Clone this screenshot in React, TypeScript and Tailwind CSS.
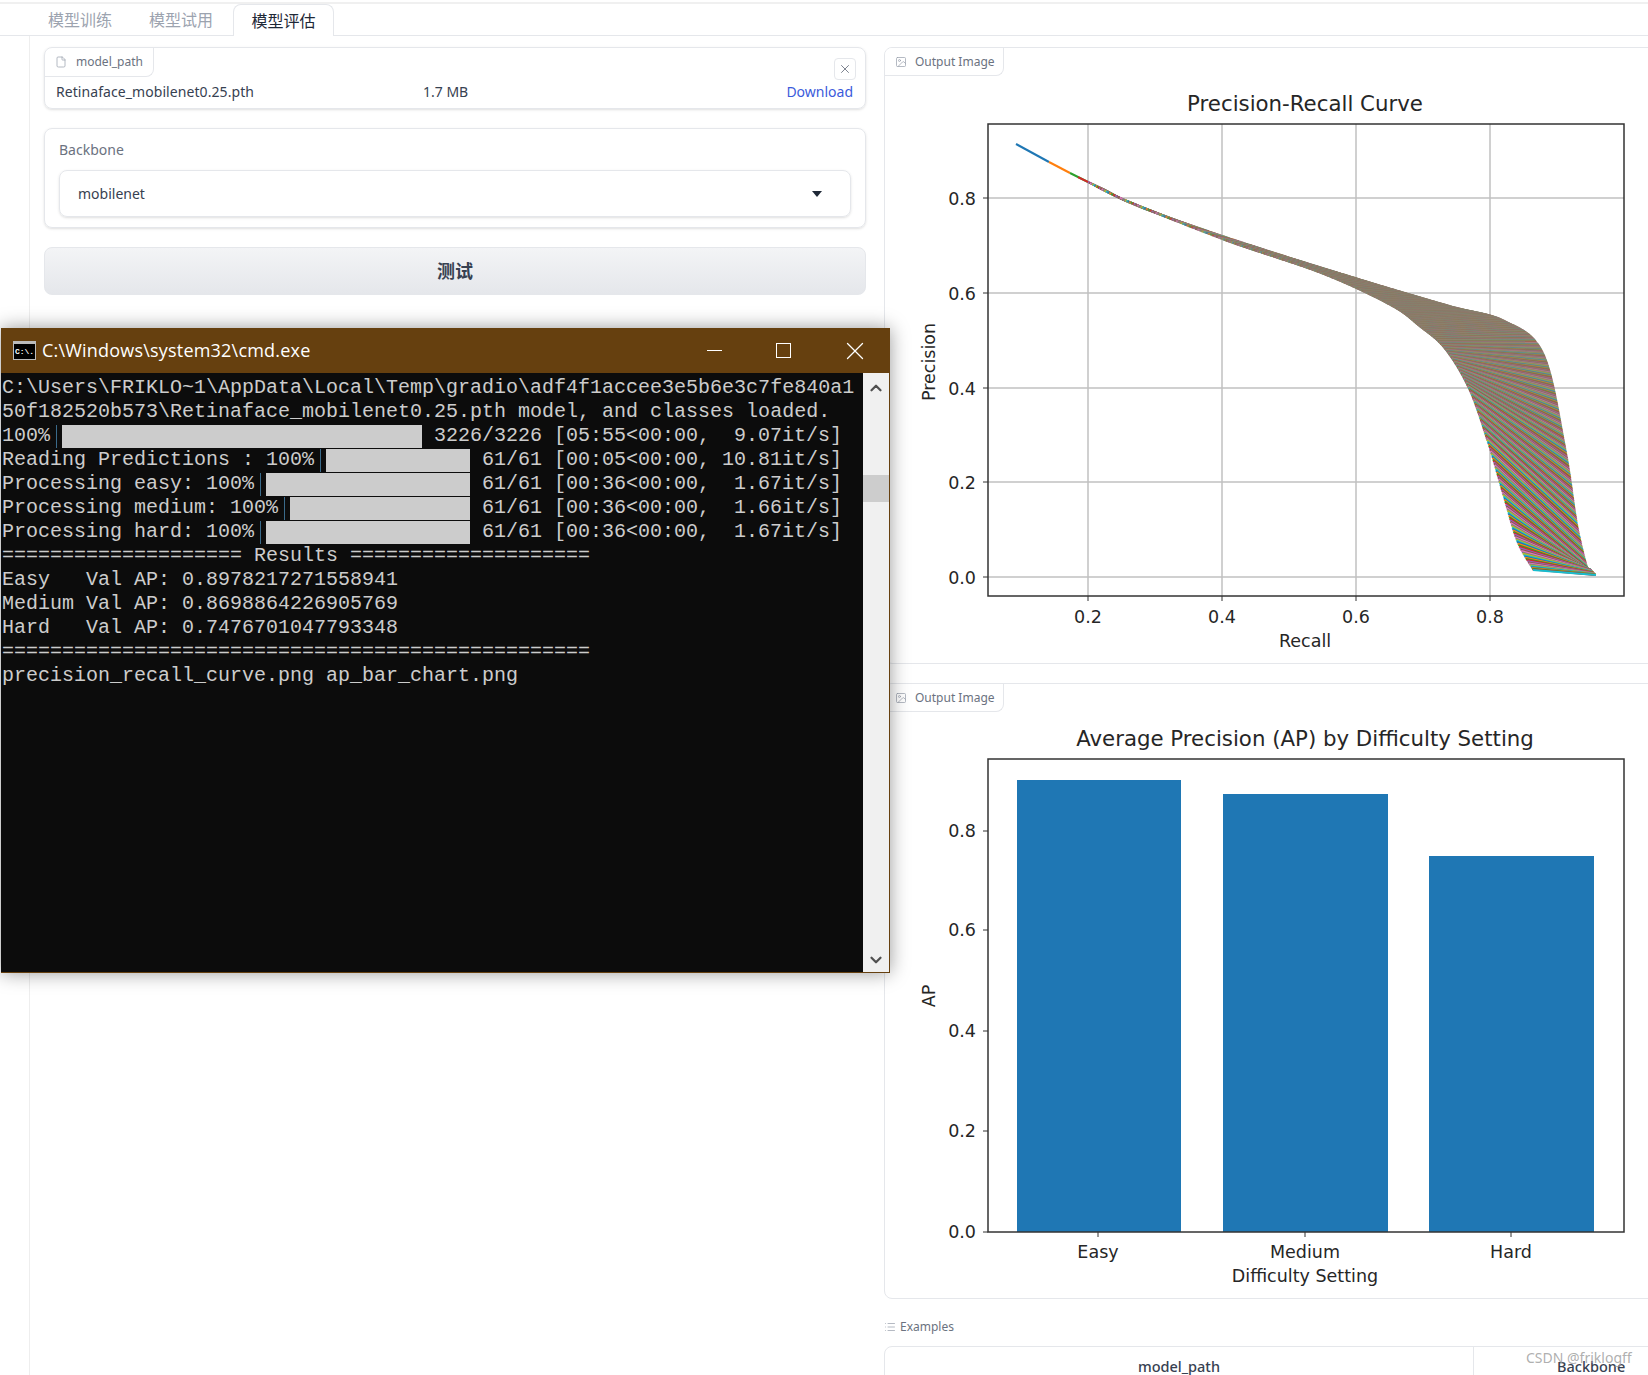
import { ChevronDown, ChevronUp, File, Image, List, X } from "lucide-react";

const UI_FONT = "font-['Noto_Sans','Noto_Sans_CJK_SC',sans-serif]";
const TAB10 = ["#1f77b4", "#ff7f0e", "#2ca02c", "#d62728", "#9467bd", "#8c564b", "#e377c2", "#7f7f7f", "#bcbd22", "#17becf"];
const MUD = [138, 125, 107];

// [left x, left y, right x, right y, lines until next key, how far the colour sinks into the brown]
const BAND: number[][] = [
  [1016, 144, 1049, 162, 1, 0],
  [1049, 162, 1070, 173, 1, 0],
  [1070, 173, 1088, 182, 2, 0],
  [1088, 182, 1105, 190, 24, 0],
  [1125, 200, 1145, 209, 50, 0.2],
  [1222, 239, 1250, 245, 110, 0.6],
  [1321, 273, 1365, 281, 120, 0.85],
  [1390, 305, 1450, 306, 110, 0.9],
  [1419, 326, 1505, 321, 110, 0.85],
  [1444, 348, 1544, 354, 120, 0.65],
  [1468, 387, 1566, 450, 70, 0.3],
  [1487, 440, 1577, 522, 40, 0.05],
  [1503, 495, 1587, 566, 32, 0],
  [1517, 542, 1591, 570, 24, 0],
  [1533, 570, 1596, 575, 1, 0],
];

const mixColor = (hex: string, amount: number) => {
  const rgb = [1, 3, 5].map((i) => parseInt(hex.slice(i, i + 2), 16));
  const out = rgb.map((v, i) => Math.round(v + (MUD[i] - v) * amount));
  return `rgb(${out.join(",")})`;
};

const buildLines = () => {
  const lines: { d: string; color: string }[] = [];
  BAND.forEach((key, k) => {
    const next = BAND[k + 1];
    if (!next) {
      lines.push({ d: `M${key[0]} ${key[1]}L${key[2]} ${key[3]}`, color: TAB10[9] });
      return;
    }
    const prev = BAND[k - 1] ?? key;
    const after = BAND[k + 2] ?? next;
    for (let i = 0; i < key[4]; i++) {
      const t = i / key[4];
      // catmull-rom so the band edges stay round
      const p = [0, 1, 2, 3].map((c) => {
        const a = prev[c];
        const b = key[c];
        const d = next[c];
        const e = after[c];
        return 0.5 * (2 * b + (d - a) * t + (2 * a - 5 * b + 4 * d - e) * t * t + (3 * b - a - 3 * d + e) * t * t * t);
      });
      lines.push({
        d: `M${p[0].toFixed(1)} ${p[1].toFixed(1)}L${p[2].toFixed(1)} ${p[3].toFixed(1)}`,
        color: mixColor(TAB10[lines.length % 10], key[5] + (next[5] - key[5]) * t),
      });
    }
  });
  return lines;
};

const SVG_TEXT = { fontFamily: "'DejaVu Sans', sans-serif", fill: "#262626" };

function PrChart() {
  const lines = buildLines();
  const xs = [
    [1088, "0.2"],
    [1222, "0.4"],
    [1356, "0.6"],
    [1490, "0.8"],
  ] as const;
  const ys = [
    [198, "0.8"],
    [293, "0.6"],
    [388, "0.4"],
    [482, "0.2"],
    [577, "0.0"],
  ] as const;
  return (
    <svg viewBox="885 48 763 615" width={763} height={615} className="block">
      <text x={1305} y={111} textAnchor="middle" fontSize={21.3} {...SVG_TEXT}>Precision-Recall Curve</text>
      {xs.map(([x, label]) => (
        <g key={label}>
          <line x1={x} x2={x} y1={124} y2={596} stroke="#c0c0c0" strokeWidth={1.5} />
          <line x1={x} x2={x} y1={596} y2={601} stroke="#333" />
          <text x={x} y={623} textAnchor="middle" fontSize={17.5} {...SVG_TEXT}>{label}</text>
        </g>
      ))}
      {ys.map(([y, label]) => (
        <g key={label}>
          <line x1={988} x2={1624} y1={y} y2={y} stroke="#c0c0c0" strokeWidth={1.5} />
          <line x1={983} x2={988} y1={y} y2={y} stroke="#333" />
          <text x={976} y={y + 7} textAnchor="end" fontSize={17.5} {...SVG_TEXT}>{label}</text>
        </g>
      ))}
      {lines.map((l, i) => (
        <path key={i} d={l.d} stroke={l.color} strokeWidth={2} fill="none" />
      ))}
      <rect x={988} y={124} width={636} height={472} fill="none" stroke="#333" strokeWidth={1.5} />
      <text x={1305} y={647} textAnchor="middle" fontSize={17.5} {...SVG_TEXT}>Recall</text>
      <text transform="translate(935 362) rotate(-90)" textAnchor="middle" fontSize={17.5} {...SVG_TEXT}>Precision</text>
    </svg>
  );
}

function ApChart() {
  const bars = [
    [1017, 164, 780, 1098, "Easy"],
    [1223, 165, 794, 1305, "Medium"],
    [1429, 165, 856, 1511, "Hard"],
  ] as const;
  const ys = [
    [831, "0.8"],
    [930, "0.6"],
    [1031, "0.4"],
    [1131, "0.2"],
    [1232, "0.0"],
  ] as const;
  return (
    <svg viewBox="885 684 763 614" width={763} height={614} className="block">
      <text x={1305} y={746} textAnchor="middle" fontSize={21.3} {...SVG_TEXT}>Average Precision (AP) by Difficulty Setting</text>
      {bars.map(([x, w, top, cx, label]) => (
        <g key={label}>
          <rect x={x} y={top} width={w} height={1232 - top} fill="#1f77b4" />
          <line x1={cx} x2={cx} y1={1232} y2={1237} stroke="#333" />
          <text x={cx} y={1258} textAnchor="middle" fontSize={17.5} {...SVG_TEXT}>{label}</text>
        </g>
      ))}
      {ys.map(([y, label]) => (
        <g key={label}>
          <line x1={983} x2={988} y1={y} y2={y} stroke="#333" />
          <text x={976} y={y + 6} textAnchor="end" fontSize={17.5} {...SVG_TEXT}>{label}</text>
        </g>
      ))}
      <rect x={988} y={759} width={636} height={473} fill="none" stroke="#333" strokeWidth={1.5} />
      <text x={1305} y={1282} textAnchor="middle" fontSize={17.5} {...SVG_TEXT}>Difficulty Setting</text>
      <text transform="translate(935 996) rotate(-90)" textAnchor="middle" fontSize={17.5} {...SVG_TEXT}>AP</text>
    </svg>
  );
}

function OutputCard({ children }: { children: React.ReactNode }) {
  return (
    <section className="relative shrink-0 w-[790px] border border-[#e5e7eb] rounded-lg bg-white overflow-hidden">
      <div className="absolute left-0 top-0 flex items-center gap-[8px] h-[28px] pl-[10px] pr-[8px] border-r border-b border-[#e5e7eb] rounded-br-lg text-[12px] text-[#6b7280] bg-white">
        <Image size={12} strokeWidth={1.5} className="text-[#9ca3af]" />
        Output Image
      </div>
      {children}
    </section>
  );
}

function ProgressLine({ label, cols, rest }: { label: string; cols: number; rest: string }) {
  return (
    <div className="flex h-[24px] items-center whitespace-pre">
      <span>{label}</span>
      <span className="flex w-[12px] h-[23px] justify-center">
        <span className="w-[1px] h-full bg-[#3a6a8a]" />
      </span>
      <span className="h-[23px] bg-[#cccccc]" style={{ width: cols * 12 }} />
      <span>{rest}</span>
    </div>
  );
}

function CmdWindow() {
  return (
    <div className="absolute left-[1px] top-[328px] w-[889px] h-[645px] flex flex-col border-r border-b border-[#66400f] shadow-[0_0_18px_rgba(0,0,0,0.4)]">
      <div className="flex items-center h-[45px] shrink-0 bg-[#66400f] text-white">
        <div className="ml-[12px] w-[23px] h-[19px] bg-black border border-[#bbbbbb] border-t-[3px] flex items-center justify-center text-[8px] font-bold font-['Liberation_Mono',monospace]">
          C:\.
        </div>
        <span className="ml-[6px] text-[18px] tracking-[0.2px] font-['Open_Sans',sans-serif]">C:\Windows\system32\cmd.exe</span>
        <span className="ml-auto w-[15px] h-[1px] bg-white" />
        <span className="ml-[54px] w-[15px] h-[15px] border border-white" />
        <X size={30} strokeWidth={1} className="ml-[49px] mr-[19px]" />
      </div>
      <div className="flex flex-1 min-h-0">
        <div className="flex-1 bg-[#0c0c0c] pl-[1px] pt-[3px] text-[#cccccc] text-[20px] leading-[24px] font-['Liberation_Mono',monospace] whitespace-pre overflow-hidden">
          <div>C:\Users\FRIKLO~1\AppData\Local\Temp\gradio\adf4f1accee3e5b6e3c7fe840a1</div>
          <div>50f182520b573\Retinaface_mobilenet0.25.pth model, and classes loaded.</div>
          <ProgressLine label="100%" cols={30} rest=" 3226/3226 [05:55<00:00,  9.07it/s]" />
          <ProgressLine label="Reading Predictions : 100%" cols={12} rest=" 61/61 [00:05<00:00, 10.81it/s]" />
          <ProgressLine label="Processing easy: 100%" cols={17} rest=" 61/61 [00:36<00:00,  1.67it/s]" />
          <ProgressLine label="Processing medium: 100%" cols={15} rest=" 61/61 [00:36<00:00,  1.66it/s]" />
          <ProgressLine label="Processing hard: 100%" cols={17} rest=" 61/61 [00:36<00:00,  1.67it/s]" />
          <div>==================== Results ====================</div>
          <div>Easy   Val AP: 0.8978217271558941</div>
          <div>Medium Val AP: 0.8698864226905769</div>
          <div>Hard   Val AP: 0.7476701047793348</div>
          <div>=================================================</div>
          <div>precision_recall_curve.png ap_bar_chart.png</div>
        </div>
        <div className="w-[26px] shrink-0 bg-[#f0f0f0] flex flex-col items-center justify-between pt-[6px] pb-[3px] text-[#505050] relative">
          <ChevronUp size={18} strokeWidth={3} />
          <div className="absolute left-0 top-[102px] w-full h-[27px] bg-[#cdcdcd]" />
          <ChevronDown size={18} strokeWidth={3} />
        </div>
      </div>
    </div>
  );
}

export default function App() {
  return (
    <div className={`relative w-[1648px] h-[1375px] overflow-hidden bg-white ${UI_FONT}`}>
      <div className="mt-[2px] h-[2px] bg-[#f0f0f0]" />
      <nav className="flex h-[32px] pl-[29px] border-b border-[#e5e7eb] text-[16px]">
        <div className="flex items-center w-[102px] pl-[19px] text-[#9ca3af]">模型训练</div>
        <div className="flex items-center w-[102px] pl-[18px] text-[#9ca3af]">模型试用</div>
        <div className="flex items-center justify-center w-[101px] h-[32px] border border-b-0 border-[#e5e7eb] rounded-t-lg bg-white text-[#1f2937]">模型评估</div>
      </nav>

      <main className="flex gap-[18px] ml-[29px] h-[1339px] pl-[14px] pt-[11px] border-l border-[#eeeeee]">
        <div className="w-[822px] shrink-0 flex flex-col gap-[19px]">
          <section className="relative h-[62px] border border-[#e5e7eb] rounded-lg shadow-sm">
            <div className="absolute left-0 top-0 flex items-center gap-[9px] h-[29px] px-[10px] border-r border-b border-[#e5e7eb] rounded-br-lg text-[12px] text-[#6b7280]">
              <File size={12} strokeWidth={1.5} className="text-[#9ca3af]" />
              model_path
            </div>
            <button className="absolute right-[9px] top-[10px] flex items-center justify-center w-[22px] h-[22px] border border-[#e5e7eb] rounded text-[#6b7280]">
              <X size={14} strokeWidth={1.5} />
            </button>
            <div className="flex items-center h-full pt-[27px] pl-[11px] pr-[12px] text-[14px] text-[#374151]">
              <span className="w-[367px] tracking-[0.07px]">Retinaface_mobilenet0.25.pth</span>
              <span>1.7 MB</span>
              <span className="ml-auto text-[#3b5bdb]">Download</span>
            </div>
          </section>

          <section className="h-[100px] border border-[#e5e7eb] rounded-lg px-[14px] pt-[11px] shadow-sm">
            <label className="block text-[14px] leading-[20px] text-[#6b7280]">Backbone</label>
            <div className="flex items-center justify-between h-[47px] mt-[10px] pl-[18px] pr-[28px] border border-[#e5e7eb] rounded-lg text-[14px] text-[#374151] shadow-sm">
              mobilenet
              <svg width="10" height="6" viewBox="0 0 10 6">
                <path d="M0 0h10L5 6z" fill="#1f2937" />
              </svg>
            </div>
          </section>

          <button className="h-[48px] rounded-lg border border-[#e5e7eb] bg-gradient-to-b from-[#f3f4f6] to-[#e5e7eb] text-[18px] font-bold text-[#374151]">
            测试
          </button>
        </div>

        <div className="flex flex-col">
          <OutputCard>
            <PrChart />
          </OutputCard>
          <div className="h-[19px] shrink-0" />
          <OutputCard>
            <ApChart />
          </OutputCard>
          <div className="flex items-center gap-[4px] h-[16px] shrink-0 mt-[20px] text-[12px] text-[#6b7280]">
            <List size={12} strokeWidth={1.5} className="text-[#9ca3af]" />
            Examples
          </div>
          <div className="flex shrink-0 w-[790px] h-[60px] mt-[11px] border border-[#e5e7eb] rounded-t-lg text-[14.5px] font-medium text-[#374151]">
            <div className="w-[588px] pt-[9px] text-center">model_path</div>
            <div className="flex-1 pt-[9px] pl-[83px] border-l border-[#e5e7eb]">Backbone</div>
          </div>
        </div>
      </main>

      <CmdWindow />
      <div className="absolute left-[1526px] top-[1347px] text-[14px] text-[#9a9a9a]/80">CSDN @friklogff</div>
    </div>
  );
}
